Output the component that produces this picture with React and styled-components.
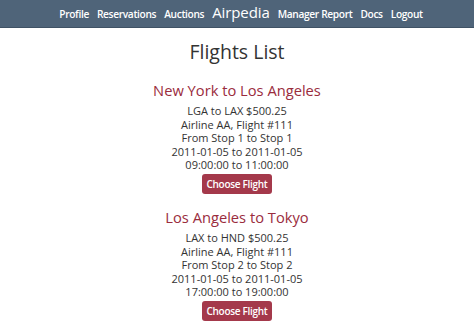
import React from 'react';
import styled, { createGlobalStyle } from 'styled-components';

const GlobalStyle = createGlobalStyle`
  html, body {
    margin: 0;
    padding: 0;
    background: #fff;
  }
  body {
    font-family: "Open Sans", "Liberation Sans", sans-serif;
    color: #333;
  }
`;

const NavBar = styled.nav`
  height: 27px;
  background: #4f6479;
  border-bottom: 1px solid #3f5265;
  display: flex;
  justify-content: center;
  align-items: center;
  gap: 8px;
  padding-left: 8px;
`;

const NavLink = styled.a`
  color: #fff;
  font-size: ${p => (p.$brand ? '15px' : '10.2px')};
  font-weight: ${p => (p.$brand ? 400 : 600)};
  letter-spacing: ${p => (p.$brand ? '-0.1px' : '-0.35px')};
  text-decoration: none;
  line-height: 1;
  margin-top: ${p => (p.$brand ? '-2px' : '1px')};
`;

const Main = styled.main`
  display: flex;
  flex-direction: column;
  align-items: center;
  padding-top: 12px;
`;

const Title = styled.h1`
  margin: 0 0 16px;
  font-size: 19.5px;
  font-weight: 400;
  color: #333;
  line-height: 24px;
`;

const Flight = styled.section`
  display: flex;
  flex-direction: column;
  align-items: center;
  margin-bottom: 13px;
`;

const Route = styled.h2`
  margin: 0 0 4px;
  font-size: 14.7px;
  font-weight: 400;
  color: #9a2c3d;
  line-height: 20px;
`;

const Line = styled.div`
  font-size: 11px;
  line-height: 13.5px;
  color: #333;
`;

const ChooseButton = styled.button`
  margin-top: 2.5px;
  background: #a4394b;
  color: #fff;
  border: none;
  border-radius: 3px;
  font-family: inherit;
  font-size: 10px;
  font-weight: 600;
  padding: 0 5px;
  height: 20px;
  letter-spacing: -0.3px;
`;

const flights = [
  {
    route: 'New York to Los Angeles',
    lines: [
      'LGA to LAX $500.25',
      'Airline AA, Flight #111',
      'From Stop 1 to Stop 1',
      '2011-01-05 to 2011-01-05',
      '09:00:00 to 11:00:00',
    ],
  },
  {
    route: 'Los Angeles to Tokyo',
    lines: [
      'LAX to HND $500.25',
      'Airline AA, Flight #111',
      'From Stop 2 to Stop 2',
      '2011-01-05 to 2011-01-05',
      '17:00:00 to 19:00:00',
    ],
  },
];

const App = () => (
  <>
    <GlobalStyle />
    <NavBar>
      <NavLink href="#">Profile</NavLink>
      <NavLink href="#">Reservations</NavLink>
      <NavLink href="#">Auctions</NavLink>
      <NavLink href="#" $brand>Airpedia</NavLink>
      <NavLink href="#">Manager Report</NavLink>
      <NavLink href="#">Docs</NavLink>
      <NavLink href="#">Logout</NavLink>
    </NavBar>
    <Main>
      <Title>Flights List</Title>
      {flights.map(f => (
        <Flight key={f.route}>
          <Route>{f.route}</Route>
          {f.lines.map(l => (
            <Line key={l}>{l}</Line>
          ))}
          <ChooseButton>Choose Flight</ChooseButton>
        </Flight>
      ))}
    </Main>
  </>
);

export default App;
